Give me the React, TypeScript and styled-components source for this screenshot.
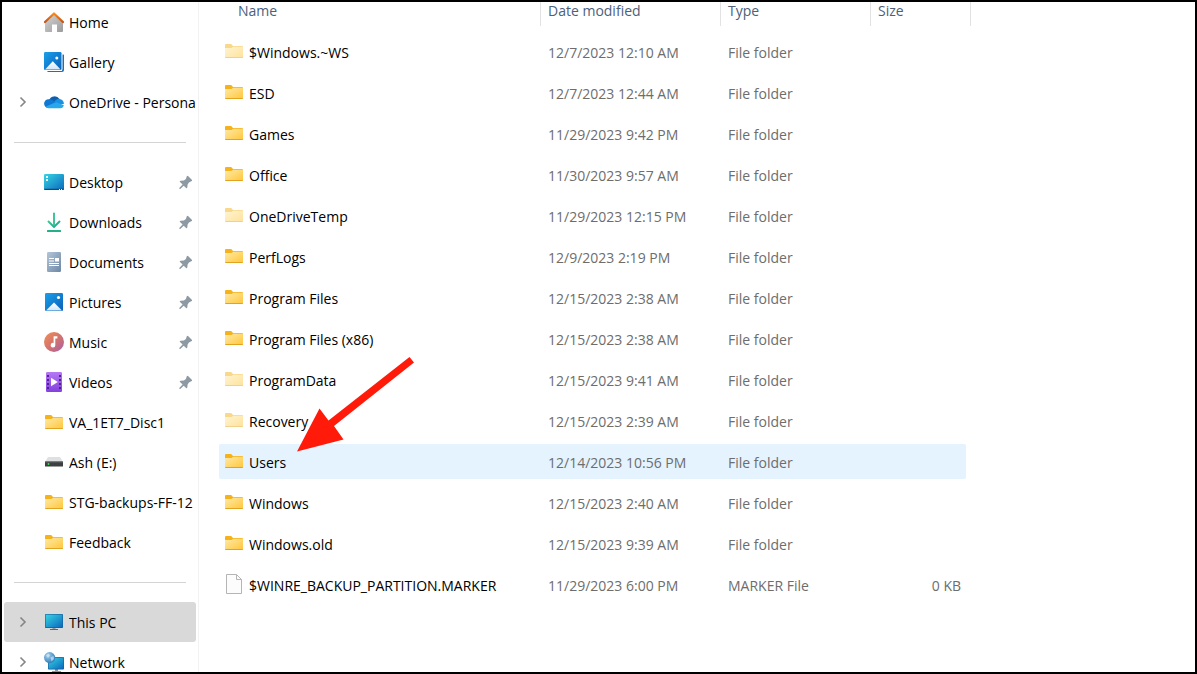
import React from "react";
import styled, { createGlobalStyle, css } from "styled-components";

const GlobalStyle = createGlobalStyle`
  *, *::before, *::after { box-sizing: border-box; }
  body {
    margin: 0;
    background: #fff;
    color: #000;
    font: 14px/20px "Segoe UI", "Open Sans", "Noto Sans", sans-serif;
  }
`;

/* ---------- layout ---------- */

const Window = styled.div`
  display: flex;
  height: 100vh;
  border: 2px solid #000;
  overflow: hidden;
  background: #fff;
`;

const Sidebar = styled.nav`
  flex: 0 0 197px;
  min-width: 0;
  border-right: 1px solid #f2f2f2;
`;

const NavList = styled.ul`
  margin: 0;
  padding: 0 2px;
  list-style: none;
`;

const Divider = styled.hr`
  height: 1px;
  margin: 20px 12px 19px;
  border: 0;
  background: #d4d4d4;
`;

const NavItem = styled.li<{ $selected?: boolean }>`
  display: flex;
  align-items: center;
  height: 40px;
  padding-left: 9px;
  border-radius: 3px;
  background: ${(p) => (p.$selected ? "#d9d9d9" : "transparent")};
`;

const ExpandSlot = styled.span`
  flex: 0 0 20px;
  height: 20px;
`;

const ExpandButton = styled.button`
  display: grid;
  place-items: center;
  width: 20px;
  height: 20px;
  padding: 0;
  border: 0;
  background: none;
  color: #858585;
`;

const NavLink = styled.a`
  display: flex;
  flex: 1;
  align-items: center;
  min-width: 0;
  padding-left: 11px;
  gap: 5px;
  color: #000;
  text-decoration: none;
`;

const NavLabel = styled.span`
  flex: 1;
  min-width: 0;
  padding-top: 2px;
  overflow: hidden;
  white-space: nowrap;
`;

const PinSlot = styled.span`
  display: grid;
  place-items: center;
  width: 14px;
  height: 14px;
  margin-right: 4px;
`;

const Icon = styled.svg`
  display: block;
  flex: none;
`;

const Content = styled.main`
  flex: 1;
  min-width: 0;
  padding-left: 20px;
`;

/* ---------- file table ---------- */

const FileTable = styled.table`
  display: block;
`;

const TableHead = styled.thead`
  display: block;
`;

const TableBody = styled.tbody`
  display: flex;
  flex-direction: column;
  gap: 6px;
  padding-top: 8px;
`;

const columns = css`
  display: grid;
  grid-template-columns: 322px 180px 150px 1fr;
`;

const HeadRow = styled.tr`
  ${columns}
  width: 752px;
`;

const HeadCell = styled.th<{ $first?: boolean }>`
  height: 24px;
  padding: 0 0 0 ${(p) => (p.$first ? 19 : 7)}px;
  border-right: 1px solid #e2e2e2;
  text-align: left;
`;

const SortButton = styled.button`
  display: block;
  padding: 0;
  border: 0;
  background: none;
  color: #4c607a;
  font: inherit;
  font-weight: 400;
  line-height: 18px;
`;

const FileRow = styled.tr<{ $selected?: boolean }>`
  ${columns}
  position: relative;
  align-items: center;
  width: 747px;
  height: 35px;
  border-radius: 2px;
  background: ${(p) => (p.$selected ? "#e5f3ff" : "transparent")};
`;

const Cell = styled.td<{ $right?: boolean }>`
  padding: 2px 5px 0 7px;
  color: #6d6d6d;
  text-align: ${(p) => (p.$right ? "right" : "left")};
  white-space: nowrap;
`;

const NameCell = styled.td`
  display: flex;
  align-items: center;
  padding: 0 0 1px 5px;
  gap: 5px;
  white-space: nowrap;
`;

const FileName = styled.span`
  padding-top: 3px;
`;

const Pointer = styled.svg`
  position: absolute;
  z-index: 1;
  left: 77px;
  top: -88px;
  pointer-events: none;
`;

/* ---------- icons ---------- */

const Box = ({ children }: { children: React.ReactNode }) => (
  <Icon width="20" height="20" viewBox="0 0 20 20" aria-hidden="true">
    {children}
  </Icon>
);

const HiddenSvg = styled.svg`
  position: absolute;
`;

const Gradients = () => (
  <HiddenSvg width="0" height="0" aria-hidden="true">
    <defs>
      <linearGradient id="folder" x1="0" y1="0" x2="1" y2="1">
        <stop offset="0" stopColor="#ffeaa6" />
        <stop offset="1" stopColor="#ffc63a" />
      </linearGradient>
      <linearGradient id="wall" x1="0" y1="0" x2="1" y2="1">
        <stop offset="0" stopColor="#d4d4d4" />
        <stop offset="1" stopColor="#9b9b9b" />
      </linearGradient>
      <linearGradient id="roof" x1="0" y1="0" x2="0" y2="1">
        <stop offset="0" stopColor="#f88a1c" />
        <stop offset="1" stopColor="#c94f10" />
      </linearGradient>
      <linearGradient id="photo" x1="0" y1="0" x2="1" y2="1">
        <stop offset="0" stopColor="#1aa0ea" />
        <stop offset="1" stopColor="#0a5fb8" />
      </linearGradient>
      <linearGradient id="hill" x1="0" y1="0" x2="0" y2="1">
        <stop offset="0" stopColor="#ffffff" />
        <stop offset="1" stopColor="#cfe7fb" />
      </linearGradient>
      <linearGradient id="screen" x1="0" y1="0" x2="1" y2="1">
        <stop offset="0" stopColor="#36d5e2" />
        <stop offset="1" stopColor="#0b68be" />
      </linearGradient>
      <linearGradient id="down" x1="0" y1="0" x2="1" y2="1">
        <stop offset="0" stopColor="#35c98c" />
        <stop offset="1" stopColor="#0f9e98" />
      </linearGradient>
      <linearGradient id="paper" x1="0" y1="0" x2="1" y2="1">
        <stop offset="0" stopColor="#b4c6d9" />
        <stop offset="1" stopColor="#6c87a6" />
      </linearGradient>
      <linearGradient id="disc" x1="0" y1="0" x2="1" y2="1">
        <stop offset="0" stopColor="#f0905a" />
        <stop offset="0.5" stopColor="#d5736b" />
        <stop offset="1" stopColor="#a65fae" />
      </linearGradient>
      <linearGradient id="film" x1="0" y1="0" x2="0" y2="1">
        <stop offset="0" stopColor="#b678f4" />
        <stop offset="1" stopColor="#8440dd" />
      </linearGradient>
      <radialGradient id="globe" cx="0.35" cy="0.3" r="0.8">
        <stop offset="0" stopColor="#a5d0ee" />
        <stop offset="1" stopColor="#2474b4" />
      </radialGradient>
    </defs>
  </HiddenSvg>
);

const FolderIcon = ({ faded }: { faded?: boolean }) => (
  <Box>
    <g opacity={faded ? 0.5 : 1}>
      <path d="M1 4a1 1 0 0 1 1-1h5.2l1.8 2h9a1 1 0 0 1 1 1v2H1z" fill="#f5b21b" />
      <path d="M1 7h6.600l1.600-1.200H19V16a1 1 0 0 1-1 1H2a1 1 0 0 1-1-1z" fill="url(#folder)" />
      <path d="M1 16h18a1 1 0 0 1-1 1H2a1 1 0 0 1-1-1z" fill="#e2a420" />
    </g>
  </Box>
);

const FileIcon = () => (
  <Box>
    <path d="M2.500.5h10l5 5v14h-15z" fill="#fcfcfc" stroke="#b5b5b5" />
    <path d="M12.500.5v5h5" fill="none" stroke="#b5b5b5" />
  </Box>
);

const HomeIcon = () => (
  <Box>
    <path d="M2 9.500 10 2l8 7.500 1 1.500v8a1 1 0 0 1-1 1h-5v-7.500H8V20H2a1 1 0 0 1-1-1v-8z" fill="url(#wall)" />
    <path d="M1 10 10 1.500 19 10" fill="none" stroke="url(#roof)" strokeWidth="2.200" strokeLinecap="round" strokeLinejoin="round" />
  </Box>
);

const GalleryIcon = () => (
  <Box>
    <path d="M18 2.500h1.500a.5.5 0 0 1 .5.5v15a2 2 0 0 1-2 2H4.500a2 2 0 0 1-1.500-1h15z" fill="#1f6fb7" />
    <rect width="18.500" height="18.500" rx="1.500" fill="#fff" />
    <rect width="17.500" height="18" rx="1.200" fill="url(#photo)" />
    <path d="M1 17.500 8.800 9.300 16.600 17.500z" fill="url(#hill)" />
    <circle cx="12.800" cy="6" r="1.500" fill="#fff" />
  </Box>
);

const CloudIcon = () => (
  <Box>
    <path d="M5 8A6 6 0 0 1 15.500 7L11 11z" fill="#0f5fae" />
    <path d="M4.500 16A4.300 4.300 0 0 1 4.500 7.200c1.600-.2 3 .2 4.300 1l5 3.200L6 16z" fill="#0e78d4" />
    <path d="M10.500 9.500c1.500-2.200 3.200-2.900 5-2.600 2.600.3 4.300 2 4.500 4.800L15 13z" fill="#1a90e0" />
    <path d="M1.500 14.800 10.500 10.700c1-.4 2-.3 3 .1l6.300 2.500A3.700 3.700 0 0 1 16.300 16.200H4.500A4.300 4.300 0 0 1 1.500 14.800z" fill="#28a8ea" />
  </Box>
);

const DesktopIcon = () => (
  <Box>
    <rect y="2" width="20" height="16" rx="1.200" fill="url(#screen)" />
    <path d="M0 16.800h20a1.200 1.200 0 0 1-1.200 1.200H1.200A1.200 1.200 0 0 1 0 16.800z" fill="#0d4a80" />
    <path d="M2 4h2v2H2zM2 7h2v2H2zM15 17h1v1h-1zM17 17h1v1h-1z" fill="#e9fbff" />
  </Box>
);

const DownloadIcon = () => (
  <Box>
    <path d="M4.500 9.500l5.500 5.500 5.500-5.500" fill="none" stroke="url(#down)" strokeWidth="1.900" strokeLinecap="round" />
    <rect x="3" y="18" width="14" height="2" rx="0.500" fill="#22b189" />
    <rect x="9.100" y="0.500" width="1.800" height="14" rx="0.800" fill="#2cbf8c" />
  </Box>
);

const DocumentIcon = () => (
  <Box>
    <rect x="3" width="14" height="20" rx="1.200" fill="url(#paper)" />
    <path d="M5 6.500h5M5 9h5M5 11.500h10M5 13.500h10" stroke="#fff" strokeWidth="1.100" />
    <rect x="11" y="6" width="4" height="3.500" fill="#fff" />
  </Box>
);

const PictureIcon = () => (
  <Box>
    <rect x="1" y="1" width="18" height="18" rx="1.200" fill="url(#photo)" />
    <path d="M2 18.500 10 10.500 18 18.500z" fill="url(#hill)" />
    <circle cx="14.500" cy="5.500" r="1.600" fill="#fff" />
  </Box>
);

const MusicIcon = () => (
  <Box>
    <circle cx="10" cy="10" r="10" fill="url(#disc)" />
    <path d="M9.600 4.300h3.800v2.300h-2.100v6.600a2.300 2.300 0 1 1-1.700-2.200z" fill="#fff" />
  </Box>
);

const VideoIcon = () => (
  <Box>
    <rect x="2" width="16" height="20" rx="1.200" fill="url(#film)" />
    <path d="M4 3v15M16 3v15" stroke="#4c1a8c" strokeWidth="1.800" strokeDasharray="2 2" />
    <path d="M7 5.800v8.400L13.800 10z" fill="#fff" />
  </Box>
);

const DriveIcon = () => (
  <Box>
    <path d="M4 5h12l3 5H1z" fill="#dfe0e2" />
    <rect x="1" y="9.500" width="18" height="5" rx="0.500" fill="#3d3f41" />
    <path d="M1 9.800h18" stroke="#737577" />
    <circle cx="4.500" cy="12" r="0.900" fill="#3fe05a" />
  </Box>
);

const PcIcon = () => (
  <Box>
    <path d="M8.500 15.500h3v2h-3z" fill="#8d9aa4" />
    <path d="M6 17h8v1H6z" fill="#5a6670" />
    <rect x="1" y="2" width="18" height="14" rx="0.800" fill="#145f9c" />
    <rect x="1.600" y="2.600" width="16.800" height="12.600" fill="url(#screen)" />
  </Box>
);

const NetworkIcon = () => (
  <Box>
    <path d="M11 17h3v2h-3zM8 19h9v1H8z" fill="#8d9aa4" />
    <rect x="4" y="5" width="16" height="12.500" rx="0.800" fill="#145f9c" />
    <rect x="4.600" y="5.600" width="14.800" height="11.100" fill="url(#screen)" />
    <circle cx="5.600" cy="5.600" r="5.600" fill="url(#globe)" />
    <path d="M2 3.500 4.500 1.500 6 3.500 4 6zM6.500 5.500l3-1.500.5 3-2.500 2.500z" fill="#d8ecf8" opacity="0.650" />
  </Box>
);

const PinIcon = () => (
  <Icon width="14" height="14" viewBox="0 0 14 14" role="img" aria-label="Pinned">
    <path d="M8.800 1.200a.8.8 0 0 1 1.200-.1l3.800 3.700a.8.8 0 0 1-.1 1.200L11 7.400 9.600 9.600 9.300 12.600a.7.7 0 0 1-1.200.4L5.700 10.700 2.600 13.800 1.300 14 1.500 12.700 4.600 9.600 2 6.900a.7.7 0 0 1 .4-1.200L5.900 5.400 7.900 3.900z" fill="#8d9aa3" />
  </Icon>
);

const Chevron = () => (
  <Icon width="8" height="12" viewBox="0 0 8 12" aria-hidden="true">
    <path d="m1.500 1.500 4.500 4.500-4.500 4.500" fill="none" stroke="currentColor" strokeWidth="1.600" />
  </Icon>
);

/* ---------- data ---------- */

type Entry = {
  label: string;
  icon: React.ReactNode;
  pinned?: boolean;
  expandable?: boolean;
  selected?: boolean;
};

const groups: Entry[][] = [
  [
    { label: "Home", icon: <HomeIcon /> },
    { label: "Gallery", icon: <GalleryIcon /> },
    { label: "OneDrive - Persona", icon: <CloudIcon />, expandable: true },
  ],
  [
    { label: "Desktop", icon: <DesktopIcon />, pinned: true },
    { label: "Downloads", icon: <DownloadIcon />, pinned: true },
    { label: "Documents", icon: <DocumentIcon />, pinned: true },
    { label: "Pictures", icon: <PictureIcon />, pinned: true },
    { label: "Music", icon: <MusicIcon />, pinned: true },
    { label: "Videos", icon: <VideoIcon />, pinned: true },
    { label: "VA_1ET7_Disc1", icon: <FolderIcon /> },
    { label: "Ash (E:)", icon: <DriveIcon /> },
    { label: "STG-backups-FF-12", icon: <FolderIcon /> },
    { label: "Feedback", icon: <FolderIcon /> },
  ],
  [
    { label: "This PC", icon: <PcIcon />, expandable: true, selected: true },
    { label: "Network", icon: <NetworkIcon />, expandable: true },
  ],
];

type FileEntry = {
  name: string;
  date: string;
  hidden?: boolean;
  selected?: boolean;
  type?: string;
  size?: string;
};

const files: FileEntry[] = [
  { name: "$Windows.~WS", date: "12/7/2023 12:10 AM", hidden: true },
  { name: "ESD", date: "12/7/2023 12:44 AM" },
  { name: "Games", date: "11/29/2023 9:42 PM" },
  { name: "Office", date: "11/30/2023 9:57 AM" },
  { name: "OneDriveTemp", date: "11/29/2023 12:15 PM", hidden: true },
  { name: "PerfLogs", date: "12/9/2023 2:19 PM" },
  { name: "Program Files", date: "12/15/2023 2:38 AM" },
  { name: "Program Files (x86)", date: "12/15/2023 2:38 AM" },
  { name: "ProgramData", date: "12/15/2023 9:41 AM", hidden: true },
  { name: "Recovery", date: "12/15/2023 2:39 AM", hidden: true },
  { name: "Users", date: "12/14/2023 10:56 PM", selected: true },
  { name: "Windows", date: "12/15/2023 2:40 AM" },
  { name: "Windows.old", date: "12/15/2023 9:39 AM" },
  { name: "$WINRE_BACKUP_PARTITION.MARKER", date: "11/29/2023 6:00 PM", type: "MARKER File", size: "0 KB" },
];

const headings = ["Name", "Date modified", "Type", "Size"];

export default function App() {
  return (
    <>
      <GlobalStyle />
      <Gradients />
      <Window>
        <Sidebar aria-label="Folders">
          {groups.map((group, i) => (
            <React.Fragment key={i}>
              {i > 0 && <Divider />}
              <NavList>
                {group.map((e) => (
                  <NavItem key={e.label} $selected={e.selected}>
                    <ExpandSlot>
                      {e.expandable && (
                        <ExpandButton type="button" aria-label={`Expand ${e.label}`}>
                          <Chevron />
                        </ExpandButton>
                      )}
                    </ExpandSlot>
                    <NavLink href="#">
                      {e.icon}
                      <NavLabel>{e.label}</NavLabel>
                      {e.pinned && (
                        <PinSlot>
                          <PinIcon />
                        </PinSlot>
                      )}
                    </NavLink>
                  </NavItem>
                ))}
              </NavList>
            </React.Fragment>
          ))}
        </Sidebar>
        <Content>
          <FileTable>
            <TableHead>
              <HeadRow>
                {headings.map((h, i) => (
                  <HeadCell key={h} $first={i === 0} scope="col">
                    <SortButton type="button">{h}</SortButton>
                  </HeadCell>
                ))}
              </HeadRow>
            </TableHead>
            <TableBody>
              {files.map((f) => (
                <FileRow key={f.name} $selected={f.selected}>
                  <NameCell>
                    {f.type ? <FileIcon /> : <FolderIcon faded={f.hidden} />}
                    <FileName>{f.name}</FileName>
                    {f.selected && (
                      <Pointer width="120" height="98" viewBox="0 0 120 98" aria-hidden="true">
                        <path d="M1 95.500 23.500 52.500 32.500 64.500 113.500 1 118 6.500 38 70 47.500 83.500z" fill="#ff1a0a" />
                      </Pointer>
                    )}
                  </NameCell>
                  <Cell>{f.date}</Cell>
                  <Cell>{f.type ?? "File folder"}</Cell>
                  <Cell $right>{f.size}</Cell>
                </FileRow>
              ))}
            </TableBody>
          </FileTable>
        </Content>
      </Window>
    </>
  );
}
